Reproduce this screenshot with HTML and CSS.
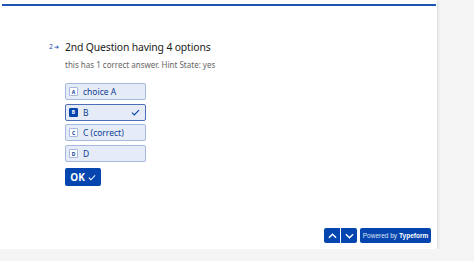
FILE: index.html
```html
<!DOCTYPE html>
<html>
<head>
  <title>Typeform question</title>
  <link rel="stylesheet" href="styles.css">
</head>
<body>
  <div id="card">
    <div class="topbar"></div>
    <div class="question">
      <div class="qhead">
        <span class="qnum">2<span class="arrow">&#10140;</span></span>
        <h1>2nd Question having 4 options</h1>
      </div>
      <p class="hint">this has 1 correct answer. Hint State: yes</p>
      <div class="choices">
        <div class="choice"><span class="key">A</span>choice A</div>
        <div class="choice selected"><span class="key">B</span>B
          <svg class="tick" width="9" height="7" viewBox="0 0 10 8"><path d="M1 4.2l2.6 2.6L9 1.2" fill="none" stroke="#0445af" stroke-width="1.3"/></svg>
        </div>
        <div class="choice"><span class="key">C</span>C (correct)</div>
        <div class="choice"><span class="key">D</span>D</div>
      </div>
      <button class="ok">OK
        <svg width="8" height="7" viewBox="0 0 10 8"><path d="M1 4.2l2.6 2.6L9 1.2" fill="none" stroke="#fff" stroke-width="1.3"/></svg>
      </button>
    </div>
    <div class="footer">
      <div class="nav">
        <button class="navbtn"><svg width="9" height="6" viewBox="0 0 10 6"><path d="M1 5l4-4 4 4" fill="none" stroke="#fff" stroke-width="1.6"/></svg></button>
        <button class="navbtn"><svg width="9" height="6" viewBox="0 0 10 6"><path d="M1 1l4 4 4-4" fill="none" stroke="#fff" stroke-width="1.6"/></svg></button>
      </div>
      <div class="powered">Powered by <b>Typeform</b></div>
    </div>
  </div>
</body>
</html>
```

FILE: styles.css
```css
body {
  margin: 0;
  background-color: #f5f5f5;
  font-family: "Noto Sans", Arial, sans-serif;
}

#card {
  width: 437px;
  height: 249px;
  background-color: #fff;
  box-shadow: 1px 1px 3px rgba(0, 0, 0, 0.12);
  box-sizing: border-box;
  padding-top: 4px;
  display: flex;
  flex-direction: column;
}

.topbar {
  height: 2px;
  margin: 0 1px 0 2px;
  background-color: #1d55b5;
}

.question {
  padding: 34px 0 0 65px;
  flex: 1;
}

.qhead {
  display: flex;
  align-items: baseline;
  position: relative;
}

.qnum {
  position: absolute;
  left: -16px;
  top: 2px;
  font-size: 7px;
  color: #1d55b5;
}

.arrow {
  font-size: 6px;
  margin-left: 1px;
}

h1 {
  margin: 0;
  font-size: 10.4px;
  letter-spacing: -0.15px;
  font-weight: normal;
  color: #222;
  line-height: 14px;
}

.hint {
  margin: 4.5px 0 0;
  font-size: 8px;
  color: #666;
  line-height: 12px;
}

.choices {
  margin-top: 12.5px;
  display: flex;
  flex-direction: column;
  gap: 3.7px;
}

.choice {
  width: 81px;
  height: 17px;
  box-sizing: border-box;
  display: flex;
  align-items: center;
  background-color: #e6ecf7;
  border: 1px solid #a5b8df;
  border-radius: 2px;
  font-size: 8.5px;
  color: #0c3d93;
  padding-left: 3px;
}

.key {
  width: 9px;
  height: 9px;
  box-sizing: border-box;
  display: inline-flex;
  align-items: center;
  justify-content: center;
  background-color: #fff;
  border: 1px solid #a5b8df;
  border-radius: 1px;
  font-size: 5px;
  font-weight: bold;
  margin-right: 5px;
}

.selected {
  border-color: #4c6fb8;
}

.selected .key {
  background-color: #0445af;
  border-color: #0445af;
  color: #fff;
}

.tick {
  margin-left: auto;
  margin-right: 5px;
}

.ok {
  margin-top: 6px;
  width: 36px;
  height: 18px;
  border: none;
  border-radius: 2px;
  background-color: #0445af;
  color: #fff;
  font-family: "Noto Sans", Arial, sans-serif;
  font-size: 10px;
  font-weight: bold;
  display: flex;
  align-items: center;
  justify-content: center;
  gap: 3px;
  padding: 0;
}

.footer {
  display: flex;
  justify-content: flex-end;
  gap: 3px;
  padding: 0 6px 6px 0;
}

.nav {
  display: flex;
  gap: 1px;
}

.navbtn {
  width: 16px;
  height: 15px;
  border: none;
  background-color: #0445af;
  padding: 0;
  display: flex;
  align-items: center;
  justify-content: center;
}

.navbtn:first-child {
  border-radius: 2px 0 0 2px;
}

.navbtn:last-child {
  border-radius: 0 2px 2px 0;
}

.powered {
  width: 71px;
  height: 15px;
  background-color: #0445af;
  border-radius: 2px;
  color: #dfe6f5;
  font-family: "Liberation Sans", Arial, sans-serif;
  font-size: 6.5px;
  display: flex;
  align-items: center;
  justify-content: center;
  gap: 2px;
}

.powered b {
  color: #fff;
}
```
